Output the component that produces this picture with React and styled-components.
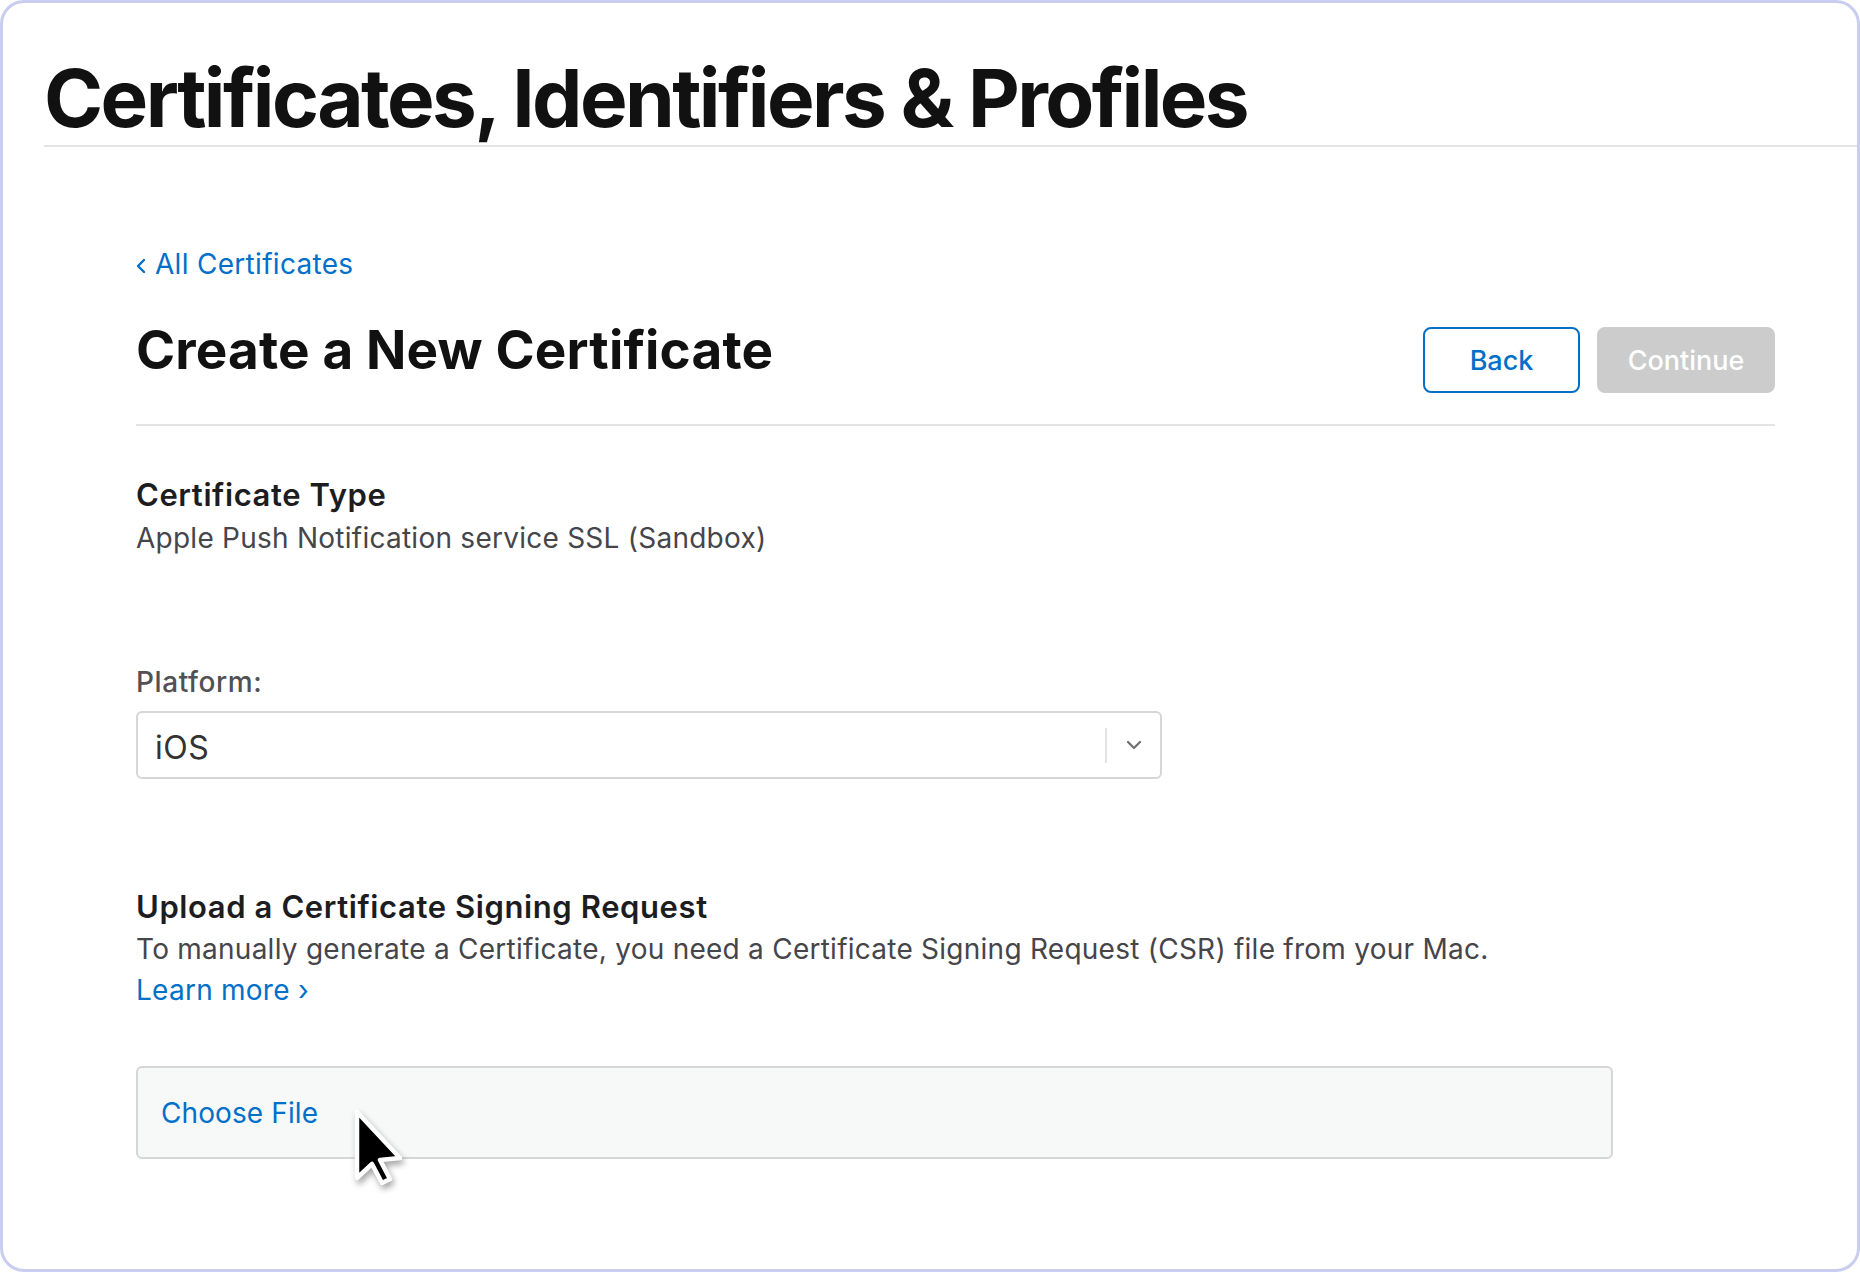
import React from 'react';
import styled, { createGlobalStyle } from 'styled-components';

const GlobalStyle = createGlobalStyle`
  html, body {
    margin: 0;
    padding: 0;
    background: #ffffff;
  }
  body {
    font-family: Inter, "Noto Sans", "Liberation Sans", sans-serif;
    color: #1d1d1f;
    -webkit-font-smoothing: antialiased;
  }
  * { box-sizing: border-box; }
`;

const Frame = styled.div`
  width: 1860px;
  height: 1272px;
  border: 3px solid #c9cdef;
  border-radius: 24px;
  background: #ffffff;
  overflow: hidden;
  display: flex;
  flex-direction: column;
`;

const Header = styled.header`
  margin-left: 41px;
  padding-top: 55px;
  padding-bottom: 7px;
  border-bottom: 2px solid #e4e4e4;
`;

const PageTitle = styled.h1`
  margin: 0;
  font-size: 80px;
  line-height: 80px;
  font-weight: 700;
  letter-spacing: -2.6px;
  color: #111111;
`;

const Content = styled.main`
  padding: 99px 82px 0 133px;
  display: flex;
  flex-direction: column;
`;

const BackLink = styled.a`
  display: flex;
  align-items: center;
  gap: 9px;
  font-size: 28px;
  line-height: 36px;
  letter-spacing: 0.3px;
  color: #0070c9;
  text-decoration: none;
  svg { margin-top: 4px; }
`;

const TitleRow = styled.div`
  margin-top: 38px;
  display: flex;
  justify-content: space-between;
  align-items: flex-start;
  padding-bottom: 31px;
  border-bottom: 2px solid #e4e4e4;
`;

const FormTitle = styled.h2`
  margin: 0;
  font-size: 53px;
  line-height: 60px;
  font-weight: 700;
  letter-spacing: 0.15px;
  color: #111111;
`;

const Actions = styled.div`
  display: flex;
  gap: 17px;
  margin-top: 7px;
`;

const Button = styled.button`
  height: 66px;
  width: ${p => p.$width}px;
  border-radius: 8px;
  font-family: inherit;
  font-size: 27px;
  font-weight: 500;
  cursor: pointer;
  border: 2px solid ${p => (p.$primary ? '#cccccc' : '#0070c9')};
  background: ${p => (p.$primary ? '#cccccc' : '#ffffff')};
  color: ${p => (p.$primary ? '#ffffff' : '#0070c9')};
`;

const Section = styled.section`
  margin-top: ${p => p.$top}px;
  display: flex;
  flex-direction: column;
`;

const SectionTitle = styled.h3`
  margin: 0;
  font-size: 31px;
  line-height: 42px;
  font-weight: 600;
  letter-spacing: 0.6px;
  color: #1d1d1f;
`;

const Body = styled.p`
  margin: ${p => p.$top || 0}px 0 0;
  font-size: 28px;
  line-height: 42px;
  letter-spacing: 0.25px;
  color: #45454a;
`;

const Label = styled.label`
  font-size: 28px;
  line-height: 42px;
  font-weight: 500;
  letter-spacing: 0.6px;
  color: #515154;
`;

const Select = styled.div`
  margin-top: 8px;
  width: 1026px;
  height: 68px;
  border: 2px solid #d6d6d6;
  border-radius: 6px;
  display: flex;
  align-items: center;
  padding-top: 4px;
  font-size: 32px;
  letter-spacing: 0.5px;
  color: #333333;
`;

const SelectValue = styled.span`
  flex: 1;
  padding-left: 17px;
`;

const SelectDivider = styled.span`
  width: 2px;
  height: 35px;
  margin-top: -4px;
  background: #e2e2e2;
`;

const SelectArrow = styled.span`
  width: 53px;
  display: flex;
  justify-content: center;
  margin-top: -4px;
`;

const MoreLink = styled.a`
  margin-top: -1px;
  font-size: 28px;
  line-height: 42px;
  letter-spacing: 0.25px;
  color: #0070c9;
  text-decoration: none;
`;

const Upload = styled.div`
  position: relative;
  margin-top: 55px;
  width: 1477px;
  height: 93px;
  border: 2px solid #d6d6d6;
  border-radius: 6px;
  background: #f7f8f8;
  display: flex;
  align-items: center;
  padding-left: 23px;
`;

const ChooseFile = styled.span`
  font-size: 28px;
  letter-spacing: 0.1px;
  color: #0070c9;
`;

const Pointer = styled.svg`
  position: absolute;
  left: 215px;
  top: 40px;
  filter: drop-shadow(2px 4px 3px rgba(0, 0, 0, 0.35));
`;

const ChevronLeft = () => (
  <svg width="10" height="16" viewBox="0 0 10 16">
    <polyline points="8,2 2,8 8,14" fill="none" stroke="#0070c9" strokeWidth="2.4" strokeLinecap="round" strokeLinejoin="round" />
  </svg>
);

const ChevronDown = () => (
  <svg width="16" height="10" viewBox="0 0 16 10">
    <polyline points="2,2 8,8 14,2" fill="none" stroke="#6e6e73" strokeWidth="2.2" strokeLinecap="round" strokeLinejoin="round" />
  </svg>
);

export default function App() {
  return (
    <>
      <GlobalStyle />
      <Frame>
        <Header>
          <PageTitle>Certificates, Identifiers &amp; Profiles</PageTitle>
        </Header>
        <Content>
          <BackLink href="#"><ChevronLeft />All Certificates</BackLink>
          <TitleRow>
            <FormTitle>Create a New Certificate</FormTitle>
            <Actions>
              <Button $width={157}>Back</Button>
              <Button $width={178} $primary disabled>Continue</Button>
            </Actions>
          </TitleRow>

          <Section $top={48}>
            <SectionTitle>Certificate Type</SectionTitle>
            <Body $top={1}>Apple Push Notification service SSL (Sandbox)</Body>
          </Section>

          <Section $top={102}>
            <Label>Platform:</Label>
            <Select>
              <SelectValue>iOS</SelectValue>
              <SelectDivider />
              <SelectArrow><ChevronDown /></SelectArrow>
            </Select>
          </Section>

          <Section $top={107}>
            <SectionTitle>Upload a Certificate Signing Request</SectionTitle>
            <Body>To manually generate a Certificate, you need a Certificate Signing Request (CSR) file from your Mac.</Body>
            <MoreLink href="#">Learn more ›</MoreLink>
            <Upload>
              <ChooseFile>Choose File</ChooseFile>
              <Pointer width="56" height="84" viewBox="-4 -4 56 84">
                <path d="M0 0 L0 66 L15 52 L25 71 L33 67 L23 48 L43 46 Z" fill="#000000" stroke="#ffffff" strokeWidth="4.5" strokeLinejoin="round" />
              </Pointer>
            </Upload>
          </Section>
        </Content>
      </Frame>
    </>
  );
}
